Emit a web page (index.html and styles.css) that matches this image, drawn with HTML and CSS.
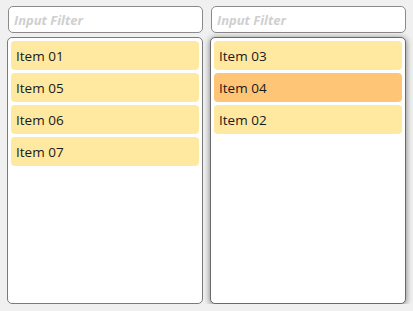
FILE: index.html
```html
<!DOCTYPE html>
<html lang="en">
<head>
    <meta charset="UTF-8">
    <title>Drag Lists</title>
    <link rel="stylesheet" href="styles.css">
</head>
<body>
    <div class="board">
        <div class="column">
            <input class="filter" type="text" placeholder="Input Filter">
            <div class="list">
                <div class="item">Item 01</div>
                <div class="item">Item 05</div>
                <div class="item">Item 06</div>
                <div class="item">Item 07</div>
            </div>
        </div>
        <div class="column">
            <input class="filter" type="text" placeholder="Input Filter">
            <div class="list active">
                <div class="item">Item 03</div>
                <div class="item selected">Item 04</div>
                <div class="item">Item 02</div>
            </div>
        </div>
    </div>
</body>
</html>
```

FILE: styles.css
```css
html, body {
    margin: 0;
    background: #f0f0f0;
    font-family: "Open Sans", "Noto Sans", sans-serif;
}

.board {
    display: grid;
    grid-template-columns: 196px 196px;
    gap: 7px;
    padding: 6px 7px 0 7px;
}

.column {
    display: flex;
    flex-direction: column;
    gap: 4px;
}

.filter {
    box-sizing: border-box;
    height: 27px;
    margin-left: 1px;
    width: 195px;
    border: 1px solid #8a8a8a;
    border-radius: 5px;
    background: #fff;
    padding: 0 5px;
    font-family: "Open Sans", sans-serif;
    font-size: 13px;
    outline: none;
}

.filter::placeholder {
    color: #cfcfcf;
    font-style: italic;
    font-weight: bold;
}

.list {
    box-sizing: border-box;
    height: 267px;
    border: 1px solid #7a7a7a;
    border-radius: 5px;
    background: #fff;
    padding: 3px 3px;
    display: flex;
    flex-direction: column;
    gap: 3px;
}

.list.active {
    border-color: #6a6a6a;
    box-shadow: 0 1px 6px rgba(0, 0, 0, 0.5);
}

.item {
    height: 29px;
    line-height: 30px;
    padding-left: 5px;
    background: #ffe8a0;
    border-radius: 4px;
    font-size: 13.5px;
    color: #1a1a1a;
}

.item.selected {
    background: #ffc577;
}
```
